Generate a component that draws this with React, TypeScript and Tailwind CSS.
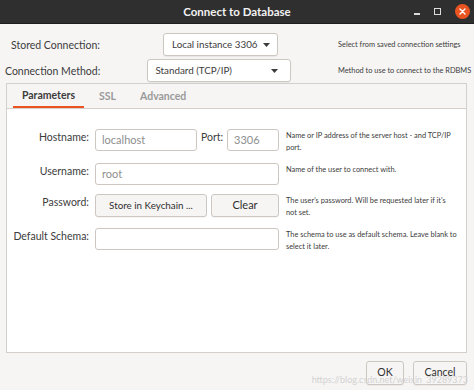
import React from "react";

const font = { fontFamily: 'Lato, "Noto Sans", sans-serif' };

function Caret() {
    return (
        <svg width="7" height="4" viewBox="0 0 7 4" className="shrink-0">
            <path d="M0 0 L7 0 L3.5 4 Z" fill="#3c3c3c" />
        </svg>
    );
}

function TitleBar() {
    return (
        <div className="relative flex h-[24px] items-center justify-center bg-[#2f2f2f] border-b border-[#1e1e1e]">
            <span className="text-[11.5px] font-bold text-[#f2f2f2]">Connect to Database</span>
            <div className="absolute right-[4px] top-0 flex h-full items-center gap-[14px]">
                <span className="mt-[4px] block h-[2px] w-[6px] bg-[#dcdcdc]" />
                <span className="block h-[7px] w-[7px] border-[1.5px] border-[#dcdcdc]" />
                <span className="flex h-[15px] w-[15px] items-center justify-center rounded-full bg-[#e95420]">
                    <svg width="7" height="7" viewBox="0 0 7 7">
                        <path d="M1 1 L6 6 M6 1 L1 6" stroke="#fff" strokeWidth="1.4" strokeLinecap="round" />
                    </svg>
                </span>
            </div>
        </div>
    );
}

function Field({ value, className }: { value?: string; className: string }) {
    return (
        <div className={`flex h-[22px] items-center rounded-[3px] border border-[#cdc7c2] bg-white px-[6px] text-[11px] text-[#8e8e8e] ${className}`}>
            {value}
        </div>
    );
}

function Btn({ label, className }: { label: string; className: string }) {
    return (
        <div className={`flex items-center justify-center whitespace-nowrap rounded-[3px] border border-[#cdc7c2] bg-[#f6f5f4] shadow-[0_1px_0_rgba(0,0,0,0.04)] text-[#303030] ${className}`}>
            {label}
        </div>
    );
}

function Help({ children }: { children: React.ReactNode }) {
    return <p className="whitespace-nowrap pt-[1px] text-[7.4px] leading-[12px] text-[#3c3c3c]">{children}</p>;
}

export default function App() {
    return (
        <div className="h-[392px] w-[474px] overflow-hidden bg-white" style={font}>
            <TitleBar />
            <div className="relative h-[366px] bg-[#f6f5f4] text-[#3c3c3c]">
                {/* top settings */}
                <div className="grid grid-cols-[98px_240px_1fr] whitespace-nowrap pt-[9px]">
                    <span className="pl-[11px] pt-[5px] text-[10.5px] leading-[14px]">Stored Connection:</span>
                    <div className="flex justify-center pl-[5px]">
                        <div className="flex h-[23px] w-[115px] items-center gap-[5px] rounded-[3px] border border-[#cdc7c2] bg-white pl-[8px] text-[9.8px] shadow-[0_1px_1px_rgba(0,0,0,0.06)]">
                            <span>Local instance 3306</span>
                            <Caret />
                        </div>
                    </div>
                    <span className="flex items-center text-[7.4px]">Select from saved connection settings</span>

                    <span className="mt-[3px] pl-[5px] pt-[5px] text-[10.5px] leading-[14px]">Connection Method:</span>
                    <div className="mt-[3px] flex justify-center pl-[1px]">
                        <div className="flex h-[23px] w-[144px] items-center justify-between rounded-[3px] border border-[#cdc7c2] bg-white pl-[8px] pr-[12px] text-[9.8px] shadow-[0_1px_1px_rgba(0,0,0,0.06)]">
                            <span>Standard (TCP/IP)</span>
                            <Caret />
                        </div>
                    </div>
                    <span className="mt-[3px] flex items-center text-[7.4px]">Method to use to connect to the RDBMS</span>
                </div>

                {/* tab panel */}
                <div className="ml-[6px] mr-[7px] mt-[1px] border border-[#d4cfca] bg-white">
                    <div className="flex h-[25px] items-stretch border-b border-[#d4cfca] bg-[#f6f5f4] pl-[6px] text-[10.5px] font-bold">
                        <span className="flex w-[71px] items-center justify-center border-b-[2px] border-[#e95420] pt-[2px] text-[#3c3c3c]">Parameters</span>
                        <span className="flex items-center pl-[15px] pt-[2px] text-[#9a9a9a]">SSL</span>
                        <span className="flex items-center pl-[24px] pt-[2px] text-[#9a9a9a]">Advanced</span>
                    </div>

                    <div className="flex h-[243px] flex-col gap-[9px] whitespace-nowrap pt-[20px]">
                        <div className="flex items-start">
                            <span className="w-[82px] pt-[1px] text-right text-[10.5px] leading-[14px]">Hostname:</span>
                            <div className="ml-[6px] flex items-start">
                                <Field value="localhost" className="w-[102px]" />
                                <span className="ml-[4px] w-[26px] pt-[1px] text-[10.5px] leading-[14px]">Port:</span>
                                <Field value="3306" className="w-[52px]" />
                            </div>
                            <div className="ml-[7px]">
                                <Help>
                                    Name or IP address of the server host - and TCP/IP
                                    <br />
                                    port.
                                </Help>
                            </div>
                        </div>

                        <div className="flex items-start">
                            <span className="w-[82px] pt-[1px] text-right text-[10.5px] leading-[14px]">Username:</span>
                            <Field value="root" className="ml-[6px] w-[184px]" />
                            <div className="ml-[7px]">
                                <Help>Name of the user to connect with.</Help>
                            </div>
                        </div>

                        <div className="flex items-start">
                            <span className="w-[82px] pt-[1px] text-right text-[10.5px] leading-[14px]">Password:</span>
                            <div className="ml-[6px] flex w-[184px] gap-[4px]">
                                <Btn label="Store in Keychain ..." className="h-[23px] w-[112px] text-[9.8px]" />
                                <Btn label="Clear" className="h-[23px] flex-1 text-[11px]" />
                            </div>
                            <div className="ml-[7px]">
                                <Help>
                                    The user's password. Will be requested later if it's
                                    <br />
                                    not set.
                                </Help>
                            </div>
                        </div>

                        <div className="flex items-start">
                            <span className="w-[82px] pt-[1px] text-right text-[10.5px] leading-[14px]">Default Schema:</span>
                            <Field className="ml-[6px] w-[184px]" />
                            <div className="ml-[7px]">
                                <Help>
                                    The schema to use as default schema. Leave blank to
                                    <br />
                                    select it later.
                                </Help>
                            </div>
                        </div>
                    </div>
                </div>

                {/* footer */}
                <div className="mr-[7px] mt-[8px] flex justify-end gap-[9px]">
                    <Btn label="OK" className="h-[24px] w-[38px] text-[10.5px]" />
                    <Btn label="Cancel" className="h-[24px] w-[54px] text-[10.5px]" />
                </div>
                <span className="pointer-events-none absolute bottom-[4px] right-[6px] text-[9px] text-[#d2d2d2]">
                    https://blog.csdn.net/weixin_39289373
                </span>
            </div>
        </div>
    );
}
